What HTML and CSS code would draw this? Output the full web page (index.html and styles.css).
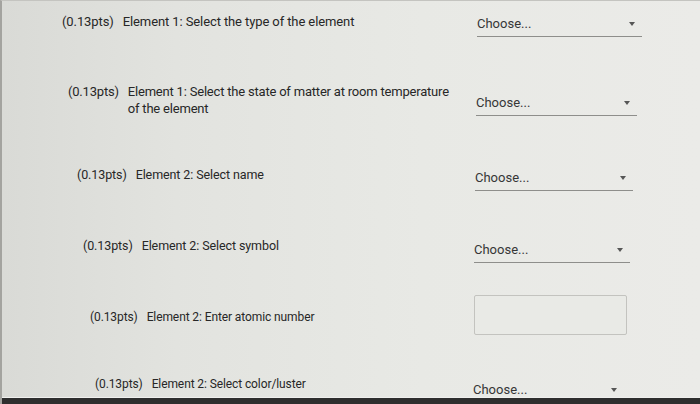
FILE: index.html
```html
<!DOCTYPE html>
<html>
<head>
<meta charset="utf-8">
<link rel="stylesheet" href="styles.css">
</head>
<body>
<div class="screen">
  <main class="quiz">
    <div class="row r1">
      <div class="label"><span class="pts">(0.13pts)</span>Element 1: Select the type of the element</div>
      <div class="select"><span>Choose...</span><i class="arrow"></i></div>
    </div>
    <div class="row r2">
      <div class="label two"><span class="pts">(0.13pts)</span><span class="txt">Element 1: Select the state of matter at room temperature<br>of the element</span></div>
      <div class="select"><span>Choose...</span><i class="arrow"></i></div>
    </div>
    <div class="row r3">
      <div class="label"><span class="pts">(0.13pts)</span>Element 2: Select name</div>
      <div class="select"><span>Choose...</span><i class="arrow"></i></div>
    </div>
    <div class="row r4">
      <div class="label"><span class="pts">(0.13pts)</span>Element 2: Select symbol</div>
      <div class="select"><span>Choose...</span><i class="arrow"></i></div>
    </div>
    <div class="row r5">
      <div class="label"><span class="pts">(0.13pts)</span>Element 2: Enter atomic number</div>
      <div class="input"></div>
    </div>
    <div class="row r6">
      <div class="label"><span class="pts">(0.13pts)</span>Element 2: Select color/luster</div>
      <div class="select"><span>Choose...</span><i class="arrow"></i></div>
    </div>
  </main>
  <div class="bezel"></div>
</div>
</body>
</html>
```
FILE: styles.css
```css
html, body {
  margin: 0;
  padding: 0;
}
body {
  width: 700px;
  height: 404px;
  overflow: hidden;
  font-family: Roboto, "Liberation Sans", sans-serif;
}
.screen {
  width: 700px;
  height: 404px;
  display: flex;
  flex-direction: column;
  background: linear-gradient(90deg, #d9dad6 0%, #e2e3df 25%, #e8e9e5 60%, #ebebe8 100%);
  border-left: 2px solid #a3a39f;
  border-top: 1px solid #c4c4c0;
  box-sizing: border-box;
}
.quiz {
  height: 397px;
  overflow: hidden;
  padding-top: 12px;
  box-sizing: border-box;
  border-bottom: 1px solid #f0f0ee;
  display: flex;
  flex-direction: column;
}
.bezel {
  flex: 1;
  background: #2e2e2e;
}
.row {
  display: flex;
  align-items: flex-start;
  flex: none;
}
.label {
  color: #272727;
  font-size: 13px;
  line-height: 18px;
  letter-spacing: -0.1px;
  display: flex;
}
.label.two {
  line-height: 17px;
  letter-spacing: -0.2px;
}
.pts {
  margin-right: 9px;
  white-space: nowrap;
}
.select {
  position: relative;
  height: 23px;
  line-height: 22px;
  border-bottom: 1.5px solid #8e8e8b;
  color: #363636;
  font-size: 13px;
  margin-left: auto;
}
.arrow {
  position: absolute;
  top: 9px;
  right: 7px;
  width: 0;
  height: 0;
  border-left: 3.5px solid transparent;
  border-right: 3.5px solid transparent;
  border-top: 4px solid #565656;
}
.input {
  margin-left: auto;
  width: 151px;
  height: 38px;
  border: 1px solid #c3c3bf;
  border-radius: 2px;
  background: #e9eae6;
}
.r1 { height: 70px; padding-left: 60px; padding-right: 58px; }
.r1 .select { width: 165px; }
.r2 { height: 83px; padding-left: 66px; padding-right: 63px; }
.r2 .select { width: 161px; margin-top: 9px; }
.r3 { height: 71px; padding-left: 75px; padding-right: 67px; }
.r3 .select { width: 158px; margin-top: 1px; }
.r3 .label, .r4 .label { font-size: 12.5px; }
.r4 { height: 58px; padding-left: 81px; padding-right: 70px; }
.r4 .select { width: 156px; margin-top: 2px; }
.r5 { height: 80px; padding-left: 88px; padding-right: 73px; }
.r5 .label { margin-top: 13px; font-size: 12px; }
.r6 { height: 40px; padding-left: 93px; padding-right: 76px; }
.r6 .label { font-size: 12px; }
.r6 .select { width: 151px; margin-top: 4px; }
```
